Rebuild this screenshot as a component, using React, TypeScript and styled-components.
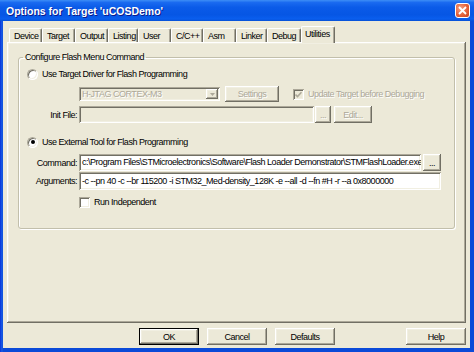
import styled, { createGlobalStyle, css } from "styled-components";

const face = "#ece9d8";
const light = "#f1efe2";
const shadow = "#aca899";
const dark = "#716f64";

const GlobalStyle = createGlobalStyle`
  html, body {
    margin: 0;
    padding: 0;
    background: #0b4ad8;
  }
  body {
    font-family: "Liberation Sans", Arial, sans-serif;
    font-size: 9px;
    letter-spacing: -0.48px;
    color: #000;
  }
`;

const raised = css`
  box-shadow: inset -1px -1px ${dark}, inset 1px 1px #fff, inset -2px -2px ${shadow}, inset 2px 2px ${light};
`;

const sunken = css`
  box-shadow: inset 1px 1px ${shadow}, inset -1px -1px #fff, inset 2px 2px ${dark}, inset -2px -2px ${light};
`;

const disabledText = css`
  color: ${shadow};
  text-shadow: 1px 1px #fff;
`;

const Window = styled.div`
  width: 474px;
  height: 352px;
  display: flex;
  flex-direction: column;
  background: linear-gradient(to right, #0831d9 0, #1a5fe6 2px, #0b4ad8 3px);
`;

const TitleBar = styled.div`
  height: 21px;
  flex-shrink: 0;
  display: flex;
  align-items: center;
  justify-content: space-between;
  padding: 0 4px 0 6px;
  background: linear-gradient(to bottom, #3d8ef6 0%, #1a6af0 12%, #0b5be8 35%, #0656e4 70%, #0a5eee 90%, #0650d6 100%);
`;

const TitleText = styled.span`
  color: #fff;
  font-weight: bold;
  font-size: 10.5px;
  letter-spacing: 0;
  text-shadow: 1px 1px #0c1a8a;
`;

const CloseButton = styled.span`
  width: 15px;
  height: 15px;
  box-sizing: border-box;
  border: 1px solid #fff;
  border-radius: 3px;
  background: radial-gradient(circle at 35% 35%, #f4a184 0%, #e4623a 55%, #c8401a 100%);
  display: flex;
  align-items: center;
  justify-content: center;
`;

const Client = styled.div`
  flex: 1;
  margin: 0 4px 4px 3px;
  background: ${face};
  display: flex;
  flex-direction: column;
  padding: 5px 4px 3px 4px;
  min-height: 0;
`;

const TabStrip = styled.div`
  height: 16px;
  flex-shrink: 0;
  display: flex;
  align-items: flex-end;
  padding-left: 2px;
  position: relative;
  z-index: 1;
`;

const Tab = styled.div<{ $w: number; $active?: boolean }>`
  width: ${(p) => p.$w}px;
  height: ${(p) => (p.$active ? 17 : 14)}px;
  margin-bottom: ${(p) => (p.$active ? -1 : 0)}px;
  box-sizing: border-box;
  padding-left: ${(p) => (p.$active ? 3 : 4)}px;
  padding-bottom: ${(p) => (p.$active ? 2 : 0)}px;
  display: flex;
  align-items: center;
  background: ${face};
  border-top: 1px solid #fff;
  border-left: 1px solid #fff;
  border-right: 1px solid ${dark};
  border-radius: 2px 2px 0 0;
  box-shadow: inset -1px 0 ${shadow};
  white-space: nowrap;
  overflow: hidden;
`;

const Panel = styled.div`
  flex: 1;
  min-height: 0;
  box-sizing: border-box;
  padding: 9px 11px 0 11px;
  ${raised}
`;

const Group = styled.fieldset`
  margin: 0;
  padding: 5px 8px 20px 8px;
  min-width: 0;
  border: 1px solid #c2bfab;
  border-radius: 3px;
  box-shadow: inset 1px 1px #fff, 1px 1px #fff;
`;

const Legend = styled.legend`
  margin-left: -4px;
  padding: 0 2px;
  line-height: 12px;
`;

const Row = styled.div<{ $mt?: number; $h: number }>`
  display: flex;
  align-items: center;
  height: ${(p) => p.$h}px;
  margin-top: ${(p) => p.$mt ?? 0}px;
  white-space: nowrap;
`;

const Label = styled.span`
  width: 50px;
  flex-shrink: 0;
  margin-right: 2px;
  text-align: right;
`;

const Radio = styled.span<{ $checked?: boolean }>`
  width: 11px;
  height: 11px;
  box-sizing: border-box;
  border-radius: 50%;
  background: #fff;
  border: 1px solid;
  border-color: ${shadow} #fff #fff ${shadow};
  box-shadow: inset 1px 1px ${dark}, inset -1px -1px ${light};
  display: flex;
  align-items: center;
  justify-content: center;
  margin-right: 4px;

  &::after {
    content: "";
    width: 4px;
    height: 4px;
    border-radius: 50%;
    background: ${(p) => (p.$checked ? "#000" : "transparent")};
  }
`;

const CheckBox = styled.span<{ $disabled?: boolean; $ml?: number }>`
  width: 11px;
  height: 11px;
  flex-shrink: 0;
  box-sizing: border-box;
  background: ${(p) => (p.$disabled ? face : "#fff")};
  margin-left: ${(p) => p.$ml ?? 0}px;
  margin-right: 4px;
  display: flex;
  align-items: center;
  justify-content: center;
  ${sunken}
`;

const Caption = styled.span<{ $disabled?: boolean }>`
  ${(p) => p.$disabled && disabledText}
`;

const Combo = styled.div`
  width: 141px;
  height: 14px;
  box-sizing: border-box;
  padding: 0 2px 0 3px;
  display: flex;
  align-items: center;
  justify-content: space-between;
  background: ${face};
  ${sunken}
  ${disabledText}
`;

const DropButton = styled.span`
  width: 12px;
  height: 10px;
  display: flex;
  align-items: center;
  justify-content: center;
  background: ${face};
  ${raised}
`;

const Button = styled.div<{ $w: number; $h?: number; $ml?: number; $disabled?: boolean; $default?: boolean }>`
  width: ${(p) => p.$w}px;
  height: ${(p) => p.$h ?? 17}px;
  margin-left: ${(p) => p.$ml ?? 0}px;
  flex-shrink: 0;
  box-sizing: border-box;
  display: flex;
  align-items: center;
  justify-content: center;
  background: ${face};
  ${raised}
  ${(p) => p.$disabled && disabledText}
  ${(p) =>
    p.$default &&
    css`
      box-shadow: inset 1px 1px #000, inset -1px -1px #000, inset -2px -2px ${dark}, inset 2px 2px #fff,
        inset -3px -3px ${shadow}, inset 3px 3px ${light};
    `}
`;

const TextBox = styled.div<{ $w: number; $h?: number; $disabled?: boolean }>`
  width: ${(p) => p.$w}px;
  height: ${(p) => p.$h ?? 17}px;
  flex-shrink: 0;
  box-sizing: border-box;
  padding: 0 3px;
  line-height: ${(p) => p.$h ?? 17}px;
  overflow: hidden;
  white-space: nowrap;
  background: ${(p) => (p.$disabled ? face : "#fff")};
  ${sunken}
`;

const Footer = styled.div`
  height: 17px;
  flex-shrink: 0;
  margin-top: 5px;
  padding-left: 132px;
  display: flex;
  gap: 8px;
`;

const HelpButton = styled(Button)`
  margin-left: auto;
`;

const tabs = [
  { name: "Device", w: 33 },
  { name: "Target", w: 33 },
  { name: "Output", w: 33 },
  { name: "Listing", w: 30 },
  { name: "User", w: 33 },
  { name: "C/C++", w: 32 },
  { name: "Asm", w: 33 },
  { name: "Linker", w: 31 },
  { name: "Debug", w: 34 },
  { name: "Utilities", w: 34, active: true },
];

export default function App() {
  return (
    <>
      <GlobalStyle />
      <Window>
        <TitleBar>
          <TitleText>Options for Target 'uCOSDemo'</TitleText>
          <CloseButton>
            <svg width="9" height="9" viewBox="0 0 9 9">
              <path d="M1 1 L8 8 M8 1 L1 8" stroke="#fff" strokeWidth="1.8" />
            </svg>
          </CloseButton>
        </TitleBar>
        <Client>
          <TabStrip>
            {tabs.map((t) => (
              <Tab key={t.name} $w={t.w} $active={t.active}>
                {t.name}
              </Tab>
            ))}
          </TabStrip>
          <Panel>
            <Group>
              <Legend>Configure Flash Menu Command</Legend>
              <Row $h={12}>
                <Radio />
                Use Target Driver for Flash Programming
              </Row>
              <Row $mt={6} $h={16}>
                <Label />
                <Combo>
                  H-JTAG CORTEX-M3
                  <DropButton>
                    <svg width="5" height="3" viewBox="0 0 5 3">
                      <path d="M0 0 H5 L2.5 3 Z" fill={shadow} />
                    </svg>
                  </DropButton>
                </Combo>
                <Button $w={54} $h={16} $ml={5} $disabled>
                  Settings
                </Button>
                <CheckBox $disabled $ml={14}>
                  <svg width="7" height="7" viewBox="0 0 7 7">
                    <path d="M0.5 3.5 L2.5 5.5 L6.5 1.2" stroke={shadow} strokeWidth="1.6" fill="none" />
                  </svg>
                </CheckBox>
                <Caption $disabled>Update Target before Debugging</Caption>
              </Row>
              <Row $mt={4} $h={17}>
                <Label>Init File:</Label>
                <TextBox $w={235} $disabled />
                <Button $w={16} $ml={1} $disabled>
                  ...
                </Button>
                <Button $w={38} $ml={3} $disabled>
                  Edit...
                </Button>
              </Row>
              <Row $mt={13} $h={12}>
                <Radio $checked />
                Use External Tool for Flash Programming
              </Row>
              <Row $mt={6} $h={17}>
                <Label>Command:</Label>
                <TextBox $w={342}>
                  c:\Program Files\STMicroelectronics\Software\Flash Loader Demonstrator\STMFlashLoader.exe
                </TextBox>
                <Button $w={18} $ml={2}>
                  ...
                </Button>
              </Row>
              <Row $mt={1} $h={18}>
                <Label>Arguments:</Label>
                <TextBox $w={362} $h={18}>
                  -c --pn 40 -c --br 115200 -i STM32_Med-density_128K -e --all -d --fn #H -r --a 0x8000000
                </TextBox>
              </Row>
              <Row $mt={6} $h={12}>
                <Label />
                <CheckBox />
                Run Independent
              </Row>
            </Group>
          </Panel>
          <Footer>
            <Button $w={60} $default>
              OK
            </Button>
            <Button $w={60}>Cancel</Button>
            <Button $w={60}>Defaults</Button>
            <HelpButton $w={60}>Help</HelpButton>
          </Footer>
        </Client>
      </Window>
    </>
  );
}
